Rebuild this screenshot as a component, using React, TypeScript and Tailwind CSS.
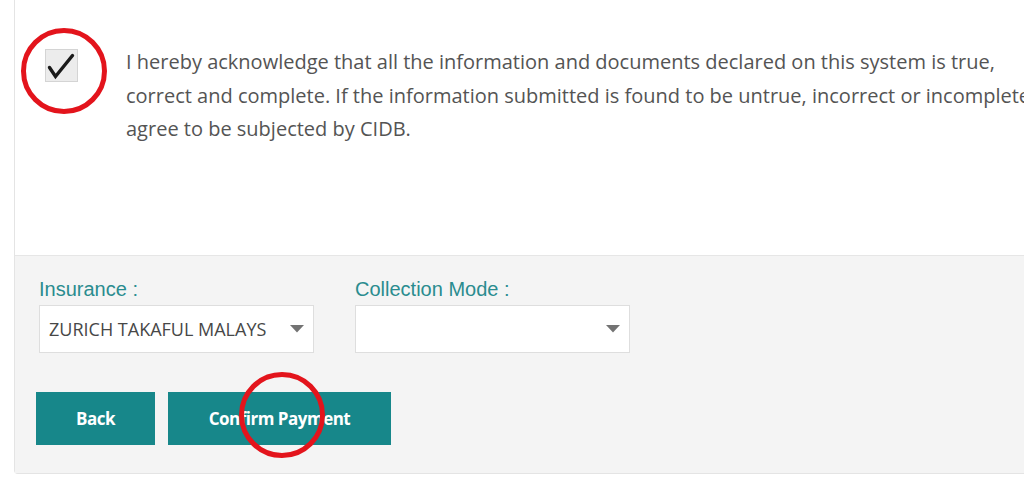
const RedRing = ({ className }: { className: string }) => (
  <svg className={className} viewBox="0 0 88 88" fill="none" aria-hidden>
    <circle cx="44" cy="44" r="40.5" stroke="#e3141c" strokeWidth="5" />
  </svg>
);

const Caret = () => (
  <svg width="14" height="8" viewBox="0 0 14 8" aria-hidden>
    <path d="M0 0 H14 L7 7.5 Z" fill="#737373" />
  </svg>
);

const SelectBox = ({ value }: { value?: string }) => (
  <div className="flex h-[48px] w-[275px] items-center justify-between border border-[#dedede] bg-white pl-[9px] pr-[9px]">
    <span className="font-['Open_Sans',sans-serif] text-[18px] text-[#474747]">{value ?? ""}</span>
    <Caret />
  </div>
);

export default function App() {
  return (
    <div className="h-[489px] w-[1024px] overflow-hidden bg-white">
      <div className="ml-[14px] w-[1100px] border-l border-[#e4e4e4] rounded-bl-[4px] border-b">
        <div className="flex h-[255px] items-start pt-[49px]">
          <div className="relative ml-[30px] mt-0 h-[33px] w-[33px]">
            <div className="h-[33px] w-[33px] border border-[#d4d4d4] bg-[#ececec]">
              <svg width="31" height="31" viewBox="0 0 31 31" aria-hidden>
                <path d="M3.5 17.5 L9.5 26.5 L26.5 5.5" stroke="#1a1a1a" strokeWidth="3.4" fill="none" strokeLinecap="round" strokeLinejoin="miter" />
              </svg>
            </div>
            <RedRing className="absolute left-[-25px] top-[-22px] h-[88px] w-[88px]" />
          </div>
          <div className="ml-[48px] mt-[-4px] font-['Open_Sans',sans-serif] text-[20px] leading-[33.5px] text-[#545454] whitespace-nowrap">
            <div>I hereby acknowledge that all the information and documents declared on this system is true,</div>
            <div>correct and complete. If the information submitted is found to be untrue, incorrect or incomplete, I</div>
            <div>agree to be subjected by CIDB.</div>
          </div>
        </div>
        <div className="h-[218px] border-t border-[#e6e6e6] bg-[#f4f4f4] pl-[24px] pt-[20px]">
          <div className="flex gap-[41px]">
            <div>
              <div className="font-['Liberation_Sans',sans-serif] text-[20px] leading-[26px] text-[#2a8c8f]">Insurance :</div>
              <div className="mt-[3px]">
                <SelectBox value="ZURICH TAKAFUL MALAYS" />
              </div>
            </div>
            <div>
              <div className="font-['Liberation_Sans',sans-serif] text-[20px] leading-[26px] text-[#2a8c8f]">Collection Mode :</div>
              <div className="mt-[3px]">
                <SelectBox />
              </div>
            </div>
          </div>
          <div className="mt-[39px] flex gap-[13px] ml-[-3px]">
            <button className="h-[53px] w-[119px] bg-[#17878a] font-['Open_Sans',sans-serif] text-[17px] font-bold text-white tracking-[-0.5px]">
              Back
            </button>
            <div className="relative">
              <button className="h-[53px] w-[223px] bg-[#17878a] font-['Open_Sans',sans-serif] text-[17px] font-bold text-white tracking-[-0.5px]">
                Confirm Payment
              </button>
              <RedRing className="absolute left-[70px] top-[-21px] h-[88px] w-[88px]" />
            </div>
          </div>
        </div>
      </div>
    </div>
  );
}
